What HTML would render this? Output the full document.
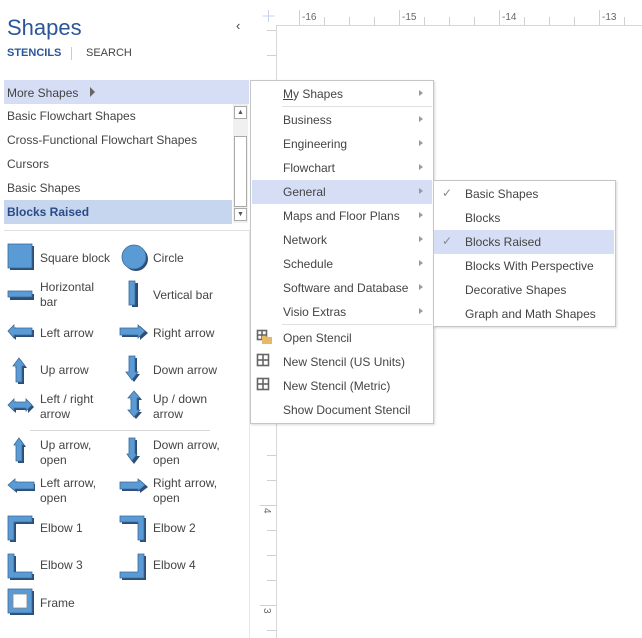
<!DOCTYPE html>
<html><head><meta charset="utf-8"><style>
*{margin:0;padding:0;box-sizing:border-box}
body{width:642px;height:638px;overflow:hidden;background:#fff;font-family:"Segoe UI","Liberation Sans",sans-serif;font-size:12px;color:#444;position:relative}
.a{position:absolute;white-space:nowrap}
.t{position:absolute;font-size:12px;line-height:15px;color:#444}
svg{position:absolute}
.mi{position:absolute;left:283px;font-size:12px;color:#444}
.ar{position:absolute;width:0;height:0;border-top:3.5px solid transparent;border-bottom:3.5px solid transparent;border-left:4px solid #777}
</style></head><body>
<div class="a" style="left:277px;top:25px;width:365px;height:1px;background:#d8d8d8"></div>
<div class="a" style="left:276px;top:25px;width:1px;height:613px;background:#d8d8d8"></div>
<svg width="642" height="638" style="left:0;top:0">
<g stroke="#d0d0d0" stroke-width="1">
<line x1="262.5" y1="16" x2="274.5" y2="16" stroke="#c8d0f0"/><line x1="268.5" y1="10" x2="268.5" y2="22" stroke="#c8d0f0"/>
<line x1="299.5" y1="10" x2="299.5" y2="25"/><line x1="324.5" y1="17" x2="324.5" y2="25"/><line x1="349.5" y1="17" x2="349.5" y2="25"/><line x1="374.5" y1="17" x2="374.5" y2="25"/>
<line x1="399.5" y1="10" x2="399.5" y2="25"/><line x1="424.5" y1="17" x2="424.5" y2="25"/><line x1="449.5" y1="17" x2="449.5" y2="25"/><line x1="474.5" y1="17" x2="474.5" y2="25"/>
<line x1="499.5" y1="10" x2="499.5" y2="25"/><line x1="524.5" y1="17" x2="524.5" y2="25"/><line x1="549.5" y1="17" x2="549.5" y2="25"/><line x1="574.5" y1="17" x2="574.5" y2="25"/>
<line x1="599.5" y1="10" x2="599.5" y2="25"/><line x1="624.5" y1="17" x2="624.5" y2="25"/>
<line x1="267" y1="30.5" x2="276" y2="30.5"/><line x1="267" y1="55.5" x2="276" y2="55.5"/>
<line x1="267" y1="455.5" x2="276" y2="455.5"/><line x1="267" y1="480.5" x2="276" y2="480.5"/><line x1="260" y1="505.5" x2="276" y2="505.5"/><line x1="267" y1="530.5" x2="276" y2="530.5"/><line x1="267" y1="555.5" x2="276" y2="555.5"/><line x1="267" y1="580.5" x2="276" y2="580.5"/><line x1="260" y1="605.5" x2="276" y2="605.5"/><line x1="267" y1="630.5" x2="276" y2="630.5"/>
</g>
<g font-size="10" fill="#666" font-family="Liberation Sans,sans-serif">
<text x="302" y="20">-16</text><text x="402" y="20">-15</text><text x="502" y="20">-14</text><text x="602" y="20">-13</text>
<text x="0" y="0" transform="translate(264,508) rotate(90)">4</text>
<text x="0" y="0" transform="translate(264,608) rotate(90)">3</text>
</g>
</svg>
<div class="a" style="left:7px;top:15px;font-size:22px;color:#2b579a">Shapes</div>
<div class="a" style="left:236px;top:18px;font-size:13px;color:#444">‹</div>
<div class="a" style="left:7px;top:47px;font-size:11px;font-weight:bold;color:#2b579a">STENCILS</div>
<div class="a" style="left:71px;top:47px;width:1px;height:13px;background:#ccc"></div>
<div class="a" style="left:86px;top:47px;font-size:11px;color:#444">SEARCH</div>
<div class="a" style="left:4px;top:80px;width:245px;height:24px;background:#d5def5"></div>
<div class="t" style="left:7px;top:86px">More Shapes</div>
<div class="ar" style="left:90px;top:87px;border-left-color:#666;border-top-width:5px;border-bottom-width:5px;border-left-width:5px"></div>
<div class="a" style="left:4px;top:200px;width:228px;height:24px;background:#c6d6ef"></div>
<div class="t" style="left:7px;top:109px">Basic Flowchart Shapes</div>
<div class="t" style="left:7px;top:133px">Cross-Functional Flowchart Shapes</div>
<div class="t" style="left:7px;top:157px">Cursors</div>
<div class="t" style="left:7px;top:181px">Basic Shapes</div>
<div class="t" style="left:7px;top:205px;font-weight:bold;color:#2b4a86">Blocks Raised</div>
<div class="a" style="left:233px;top:104px;width:15px;height:119px;background:#f0f0f0"></div>
<div class="a" style="left:234px;top:106px;width:13px;height:13px;border:1px solid #aaa;background:#fff;font-size:7px;text-align:center;line-height:11px;color:#555">▲</div>
<div class="a" style="left:234px;top:136px;width:13px;height:71px;border:1px solid #aaa;background:#fff"></div>
<div class="a" style="left:234px;top:208px;width:13px;height:13px;border:1px solid #aaa;background:#fff;font-size:7px;text-align:center;line-height:11px;color:#555">▼</div>
<div class="a" style="left:4px;top:230px;width:245px;height:1px;background:#e0e0e0"></div>
<div class="a" style="left:30px;top:430px;width:180px;height:1px;background:#d8d8d8"></div>
<div class="a" style="left:249px;top:230px;width:1px;height:408px;background:#e8e8e8"></div>

<svg width="250" height="638" style="left:0;top:0">
<g fill="#5b9bd5" stroke="#3a6a9a" stroke-width="0.8">
<rect x="10" y="246" width="24" height="24" fill="#2e4d72" stroke="none"/><rect x="8" y="244" width="24" height="24"/>
<circle cx="136" cy="259" r="12" fill="#2e4d72" stroke="none"/><circle cx="134" cy="257" r="12"/>
<rect x="10" y="294" width="24" height="6" fill="#2e4d72" stroke="none"/><rect x="8" y="291" width="24" height="6"/>
<rect x="132" y="283" width="6" height="24" fill="#2e4d72" stroke="none"/><rect x="129" y="281" width="6" height="24"/>
<path d="M10 333 L16 327 L16 330 L34 330 L34 337 L16 337 L16 340Z" fill="#2e4d72" stroke="none"/><path d="M8 331 L14 325 L14 328 L32 328 L32 335 L14 335 L14 338Z"/>
<path d="M122 329 L140 329 L140 326 L148 333 L140 340 L140 337 L122 337Z" fill="#2e4d72" stroke="none"/><path d="M120 328 L138 328 L138 325 L145 331 L138 338 L138 335 L120 335Z"/>
<path d="M21 360 L27 368 L24 368 L24 384 L18 384 L18 368 L15 368Z" fill="#2e4d72" stroke="none"/><path d="M19 358 L25 366 L22 366 L22 382 L16 382 L16 366 L13 366Z"/>
<path d="M131 358 L137 358 L137 374 L140 374 L134 382 L128 374 L131 374Z" fill="#2e4d72" stroke="none"/><path d="M129 356 L135 356 L135 372 L138 372 L132 380 L126 372 L129 372Z"/>
<path d="M10 407 L16 401 L16 404 L28 404 L28 401 L34 407 L28 413 L28 410 L16 410 L16 413Z" fill="#2e4d72" stroke="none"/><path d="M8 405 L14 399 L14 402 L26 402 L26 399 L32 405 L26 411 L26 408 L14 408 L14 411Z"/>
<path d="M136 393 L142 400 L139 400 L139 412 L142 412 L136 419 L130 412 L133 412 L133 400 L130 400Z" fill="#2e4d72" stroke="none"/><path d="M134 391 L140 398 L137 398 L137 410 L140 410 L134 417 L128 410 L131 410 L131 398 L128 398Z"/>
<path d="M21 440 L26 447 L24 447 L24 463 L18 463 L18 447 L16 447Z" fill="#2e4d72" stroke="none"/><path d="M19 438 L24 445 L22 445 L22 461 L16 461 L16 445 L14 445Z"/>
<path d="M131 440 L137 440 L137 456 L140 456 L134 464 L128 456 L131 456Z" fill="#2e4d72" stroke="none"/><path d="M129 438 L135 438 L135 454 L137 454 L132 461 L127 454 L129 454Z"/>
<path d="M10 486 L17 481 L17 484 L35 484 L35 491 L17 491 L17 493Z" fill="#2e4d72" stroke="none"/><path d="M8 485 L15 479 L15 482 L34 482 L34 489 L15 489 L15 491Z"/>
<path d="M122 483 L140 483 L140 480 L148 487 L140 493 L140 491 L122 491Z" fill="#2e4d72" stroke="none"/><path d="M120 482 L138 482 L138 479 L145 485 L138 491 L138 489 L120 489Z"/>
<path d="M10 518 L34 518 L34 524 L16 524 L16 542 L10 542Z" fill="#2e4d72" stroke="none"/><path d="M8 516 L32 516 L32 522 L14 522 L14 540 L8 540Z"/>
<path d="M122 518 L146 518 L146 542 L140 542 L140 524 L122 524Z" fill="#2e4d72" stroke="none"/><path d="M120 516 L144 516 L144 540 L138 540 L138 522 L120 522Z"/>
<path d="M10 556 L16 556 L16 574 L34 574 L34 580 L10 580Z" fill="#2e4d72" stroke="none"/><path d="M8 554 L14 554 L14 572 L32 572 L32 578 L8 578Z"/>
<path d="M140 556 L146 556 L146 580 L122 580 L122 574 L140 574Z" fill="#2e4d72" stroke="none"/><path d="M138 554 L144 554 L144 578 L120 578 L120 572 L138 572Z"/>
<rect x="10" y="591" width="24" height="24" fill="#2e4d72" stroke="none"/><rect x="8" y="589" width="24" height="24"/>
<rect x="13" y="594" width="14" height="14" fill="#fff" stroke="#888"/>
</g>
</svg>
<div class="t" style="left:40px;top:251px">Square block</div>
<div class="t" style="left:153px;top:251px">Circle</div>
<div class="t" style="left:40px;top:280px">Horizontal<br>bar</div>
<div class="t" style="left:153px;top:288px">Vertical bar</div>
<div class="t" style="left:40px;top:326px">Left arrow</div>
<div class="t" style="left:153px;top:326px">Right arrow</div>
<div class="t" style="left:40px;top:363px">Up arrow</div>
<div class="t" style="left:153px;top:363px">Down arrow</div>
<div class="t" style="left:40px;top:392px">Left / right<br>arrow</div>
<div class="t" style="left:153px;top:392px">Up / down<br>arrow</div>
<div class="t" style="left:40px;top:438px">Up arrow,<br>open</div>
<div class="t" style="left:153px;top:438px">Down arrow,<br>open</div>
<div class="t" style="left:40px;top:476px">Left arrow,<br>open</div>
<div class="t" style="left:153px;top:476px">Right arrow,<br>open</div>
<div class="t" style="left:40px;top:521px">Elbow 1</div>
<div class="t" style="left:153px;top:521px">Elbow 2</div>
<div class="t" style="left:40px;top:558px">Elbow 3</div>
<div class="t" style="left:153px;top:558px">Elbow 4</div>
<div class="t" style="left:40px;top:596px">Frame</div>

<div class="a" style="left:250px;top:80px;width:184px;height:344px;background:#fff;border:1px solid #c6c6c6;box-shadow:1px 1px 2px rgba(0,0,0,.15)"></div>
<div class="a" style="left:282px;top:106px;width:150px;height:1px;background:#e0e0e0"></div>
<div class="a" style="left:282px;top:324px;width:150px;height:1px;background:#e0e0e0"></div>
<div class="a" style="left:252px;top:180px;width:180px;height:24px;background:#d5def5"></div>
<div class="mi" style="top:87px"><u>M</u>y Shapes</div>
<div class="mi" style="top:113px">Business</div>
<div class="mi" style="top:137px">Engineering</div>
<div class="mi" style="top:161px">Flowchart</div>
<div class="mi" style="top:185px">General</div>
<div class="mi" style="top:209px">Maps and Floor Plans</div>
<div class="mi" style="top:233px">Network</div>
<div class="mi" style="top:257px">Schedule</div>
<div class="mi" style="top:281px">Software and Database</div>
<div class="mi" style="top:305px">Visio Extras</div>
<div class="mi" style="top:331px">Open Stencil</div>
<div class="mi" style="top:355px">New Stencil (US Units)</div>
<div class="mi" style="top:379px">New Stencil (Metric)</div>
<div class="mi" style="top:403px">Show Document Stencil</div>
<div class="ar" style="left:419px;top:90px;border-left-color:#999"></div>
<div class="ar" style="left:419px;top:116px;border-left-color:#999"></div>
<div class="ar" style="left:419px;top:140px;border-left-color:#999"></div>
<div class="ar" style="left:419px;top:164px;border-left-color:#999"></div>
<div class="ar" style="left:419px;top:188px;border-left-color:#999"></div>
<div class="ar" style="left:419px;top:212px;border-left-color:#999"></div>
<div class="ar" style="left:419px;top:236px;border-left-color:#999"></div>
<div class="ar" style="left:419px;top:260px;border-left-color:#999"></div>
<div class="ar" style="left:419px;top:284px;border-left-color:#999"></div>
<div class="ar" style="left:419px;top:308px;border-left-color:#999"></div>
<svg width="20" height="90" style="left:256px;top:328px">
<g fill="none" stroke="#666" stroke-width="1.6">
<rect x="1.5" y="2.5" width="9" height="9"/><line x1="6" y1="2.5" x2="6" y2="11.5"/><line x1="1.5" y1="7" x2="10.5" y2="7"/>
<rect x="1.5" y="26.5" width="11" height="11"/><line x1="7" y1="26.5" x2="7" y2="37.5"/><line x1="1.5" y1="32" x2="12.5" y2="32"/>
<rect x="1.5" y="50.5" width="11" height="11"/><line x1="7" y1="50.5" x2="7" y2="61.5"/><line x1="1.5" y1="56" x2="12.5" y2="56"/>
</g>
<path d="M6 8 H10 L11 9 H16 V16 H6Z" fill="#e8b864"/>
</svg>
<div class="a" style="left:433px;top:180px;width:183px;height:147px;background:#fff;border:1px solid #c6c6c6;box-shadow:1px 1px 2px rgba(0,0,0,.15)"></div>
<div class="a" style="left:434px;top:230px;width:180px;height:24px;background:#d5def5"></div>
<div class="mi" style="left:465px;top:187px">Basic Shapes</div>
<div class="mi" style="left:465px;top:211px">Blocks</div>
<div class="mi" style="left:465px;top:235px">Blocks Raised</div>
<div class="mi" style="left:465px;top:259px">Blocks With Perspective</div>
<div class="mi" style="left:465px;top:283px">Decorative Shapes</div>
<div class="mi" style="left:465px;top:307px">Graph and Math Shapes</div>
<div class="a" style="left:442px;top:186px;font-size:12px;color:#888">✓</div>
<div class="a" style="left:442px;top:234px;font-size:12px;color:#888">✓</div>
</body></html>
